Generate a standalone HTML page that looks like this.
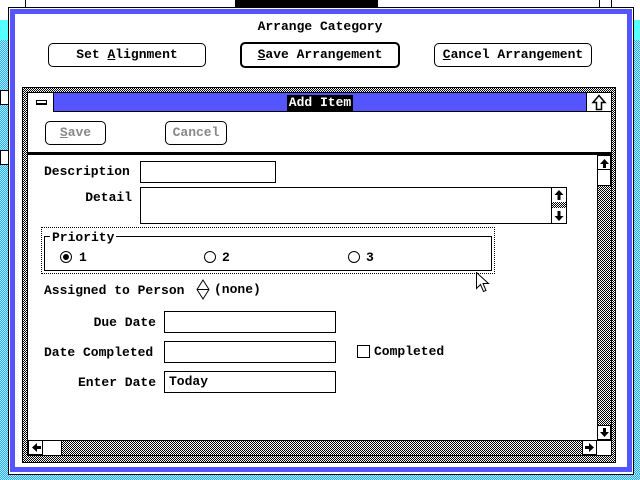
<!DOCTYPE html>
<html><head><style>
*{margin:0;padding:0;box-sizing:border-box}
body{width:640px;height:480px;position:relative;overflow:hidden;background:#fff;font-family:"Liberation Mono",monospace;font-weight:bold;font-size:13px;color:#000}
.a{position:absolute}
.dz{background:repeating-conic-gradient(#000 0 25%,#fff 0 50%) 0 0/2px 2px}
.db{background:repeating-conic-gradient(#3aa0f0 0 25%,#9ef6ff 0 50%) 0 0/2px 2px}
.btn{position:absolute;border:1px solid #000;border-radius:5px;text-align:center;line-height:22px;background:#fff}
.box{position:absolute;border:1px solid #000;background:#fff}
.t{position:absolute;white-space:nowrap;line-height:14px}
.r{text-align:right}
.gray{color:#888}
.arr{position:absolute;background:#fff;border:1px solid #000}
.arr svg{position:absolute;left:0;top:0}
</style></head><body>
<!-- background -->
<div class="a db" style="left:0;top:40px;width:9px;height:440px"></div>
<div class="a" style="left:0;top:20px;width:9px;height:20px;background:#55ffff"></div>
<div class="a" style="left:0;top:90px;width:9px;height:15px;background:#fff;border:1px solid #000"></div>
<div class="a" style="left:0;top:150px;width:9px;height:15px;background:#fff;border:1px solid #000"></div>
<div class="a db" style="left:633px;top:40px;width:7px;height:440px"></div>
<div class="a" style="left:633px;top:20px;width:7px;height:20px;background:#55ffff"></div>
<div class="a db" style="left:0;top:474px;width:640px;height:6px"></div>
<div class="a" style="left:235px;top:0;width:143px;height:7px;background:#000"></div>
<div class="a" style="left:25px;top:0;width:1px;height:7px;background:#000"></div>
<div class="a" style="left:599px;top:0;width:1px;height:7px;background:#000"></div>
<div class="a" style="left:611px;top:0;width:1px;height:7px;background:#000"></div>
<!-- outer dialog -->
<div class="a" style="left:8px;top:7px;width:626px;height:468px;background:#fff;border:1px solid #000"></div>
<div class="a" style="left:10px;top:9px;width:622px;height:463px;border:5px solid #5555ff"></div>
<div class="t" style="left:0;width:640px;top:20px;text-align:center">Arrange Category</div>
<div class="btn" style="left:48px;top:43px;width:158px;height:24px">Set <u>A</u>lignment</div>
<div class="btn" style="left:240px;top:42px;width:160px;height:26px;border-width:2px;line-height:22px"><u>S</u>ave Arrangement</div>
<div class="btn" style="left:434px;top:43px;width:158px;height:24px"><u>C</u>ancel Arrangement</div>
<!-- inner window -->
<div class="a dz" style="left:22px;top:87px;width:594px;height:376px;border:1px solid #000"></div>
<div class="a" style="left:27px;top:92px;width:585px;height:364px;background:#fff;border:1px solid #000"></div>
<div class="a" style="left:28px;top:93px;width:583px;height:19px;background:#5555ff;border-bottom:1px solid #000"></div>
<div class="a" style="left:28px;top:93px;width:26px;height:19px;background:#fff;border-right:1px solid #000"></div>
<div class="a" style="left:36px;top:100px;width:11px;height:5px;border:1px solid #000;border-bottom-width:2px"></div>
<div class="a" style="left:586px;top:93px;width:25px;height:18px;background:#fff;border-left:1px solid #000"></div>
<svg class="a" style="left:590px;top:94px" width="18" height="17"><path d="M9 1.5L3 8.5H6.5V15.5H11.5V8.5H15Z" fill="#fff" stroke="#000" stroke-width="1.5"/></svg>
<div class="t" style="left:287px;top:95px;width:66px;height:16px;background:#000;color:#fff;text-align:center;line-height:16px">Add Item</div>
<div class="btn gray" style="left:45px;top:121px;width:61px;height:24px"><u>S</u>ave</div>
<div class="btn gray" style="left:165px;top:121px;width:62px;height:24px">Cancel</div>
<div class="a" style="left:28px;top:152px;width:583px;height:3px;background:#000"></div>
<!-- vscroll -->
<div class="a dz" style="left:597px;top:155px;width:14px;height:285px;border-left:1px solid #000"></div>
<div class="arr" style="left:597px;top:155px;width:14px;height:15px"><svg width="13" height="14"><path d="M6.5 3L2 8H5V12H8V8H11Z"/></svg></div>
<div class="a" style="left:597px;top:170px;width:14px;height:16px;background:#fff;border:1px solid #000;border-top:0"></div>
<div class="arr" style="left:597px;top:425px;width:14px;height:15px"><svg width="13" height="14"><path d="M6.5 11L2 6H5V2H8V6H11Z"/></svg></div>
<!-- hscroll -->
<div class="a dz" style="left:28px;top:440px;width:569px;height:15px;border-top:1px solid #000"></div>
<div class="arr" style="left:28px;top:440px;width:15px;height:15px"><svg width="14" height="13"><path d="M3 6.5L8 2V5H12V8H8V11Z"/></svg></div>
<div class="a" style="left:43px;top:441px;width:19px;height:14px;background:#fff;border-right:1px solid #000"></div>
<div class="arr" style="left:582px;top:440px;width:15px;height:15px"><svg width="14" height="13"><path d="M11 6.5L6 2V5H2V8H6V11Z"/></svg></div>
<div class="a" style="left:597px;top:440px;width:14px;height:15px;background:#fff;border-top:1px solid #000"></div>
<!-- form -->
<div class="t" style="left:44px;top:165px">Description</div>
<div class="box" style="left:140px;top:161px;width:136px;height:22px"></div>
<div class="t r" style="left:40px;width:92px;top:191px">Detail</div>
<div class="box" style="left:140px;top:187px;width:427px;height:37px"></div>
<div class="a" style="left:551px;top:187px;width:16px;height:37px;border:1px solid #000;border-right:0"></div>
<div class="a dz" style="left:552px;top:202px;width:14px;height:6px"></div>
<svg class="a" style="left:552px;top:188px" width="14" height="14"><path d="M7 2L2.5 7H5.5V12H8.5V7H11.5Z"/></svg>
<svg class="a" style="left:552px;top:208px" width="14" height="15"><path d="M7 13L2.5 8H5.5V3H8.5V8H11.5Z"/></svg>
<div class="a" style="left:41px;top:227px;width:454px;height:47px;border:1px dotted #000"></div>
<div class="a" style="left:44px;top:236px;width:448px;height:35px;border:1px solid #000;border-left-color:transparent"></div>
<div class="t" style="left:50px;top:231px;background:#fff;padding:0 2px">Priority</div>
<div class="a" style="left:44px;top:236px;width:5px;height:1px;background:#000"></div>
<div class="a" style="left:44px;top:236px;width:1px;height:35px;background:#000"></div>
<div class="a" style="left:60px;top:251px;width:12px;height:12px;border:1px solid #000;border-radius:50%"></div>
<div class="a" style="left:63px;top:254px;width:6px;height:6px;background:#000;border-radius:50%"></div>
<div class="t" style="left:79px;top:251px">1</div>
<div class="a" style="left:204px;top:251px;width:12px;height:12px;border:1px solid #000;border-radius:50%"></div>
<div class="t" style="left:222px;top:251px">2</div>
<div class="a" style="left:348px;top:251px;width:12px;height:12px;border:1px solid #000;border-radius:50%"></div>
<div class="t" style="left:366px;top:251px">3</div>
<div class="t" style="left:44px;top:284px">Assigned to Person</div>
<svg class="a" style="left:196px;top:279px" width="14" height="22"><path d="M7 1L1 10.5L7 20L13 10.5Z M1 10.5H13" fill="none" stroke="#000"/></svg>
<div class="t" style="left:214px;top:283px">(none)</div>
<div class="t r" style="left:40px;width:116px;top:316px">Due Date</div>
<div class="box" style="left:164px;top:311px;width:172px;height:22px"></div>
<div class="t" style="left:44px;top:346px">Date Completed</div>
<div class="box" style="left:164px;top:341px;width:172px;height:22px"></div>
<div class="box" style="left:357px;top:345px;width:13px;height:13px"></div>
<div class="t" style="left:374px;top:345px">Completed</div>
<div class="t r" style="left:40px;width:116px;top:376px">Enter Date</div>
<div class="box" style="left:164px;top:371px;width:172px;height:22px"></div>
<div class="t" style="left:169px;top:375px">Today</div>
<svg class="a" style="left:476px;top:272px" width="14" height="22"><path d="M0.5 0.5V16.5L4.5 12.5L7.5 19.5L10 18.5L7 11.5H12.5Z" fill="#fff" stroke="#000"/></svg>
</body></html>
